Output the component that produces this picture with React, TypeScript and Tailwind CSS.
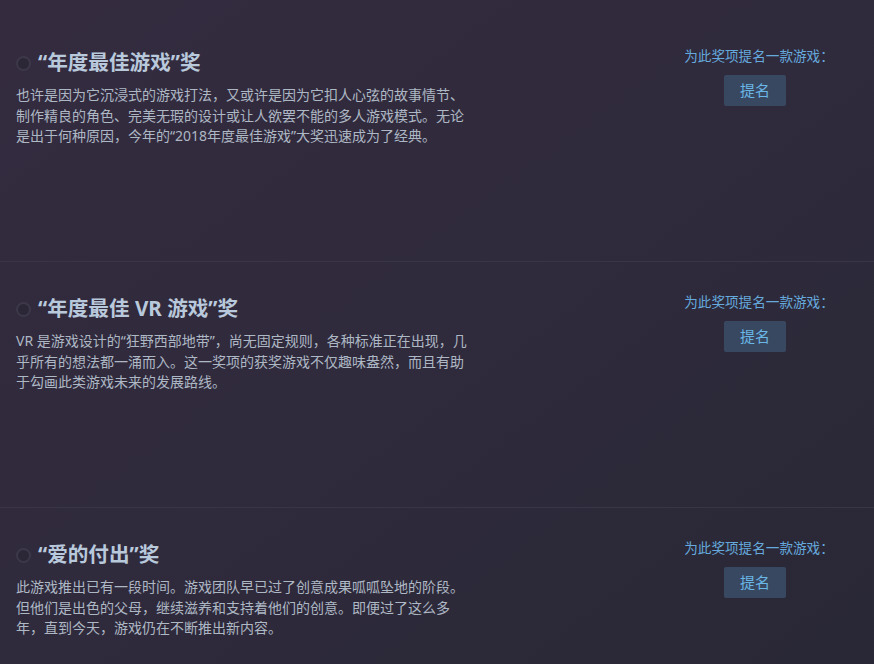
import React from "react";

type Award = { title: string; lines: string[] };

const awards: Award[] = [
  {
    title: "“年度最佳游戏”奖",
    lines: [
      "也许是因为它沉浸式的游戏打法，又或许是因为它扣人心弦的故事情节、",
      "制作精良的角色、完美无瑕的设计或让人欲罢不能的多人游戏模式。无论",
      "是出于何种原因，今年的“2018年度最佳游戏”大奖迅速成为了经典。",
    ],
  },
  {
    title: "“年度最佳 VR 游戏”奖",
    lines: [
      "VR 是游戏设计的“狂野西部地带”，尚无固定规则，各种标准正在出现，几",
      "乎所有的想法都一涌而入。这一奖项的获奖游戏不仅趣味盎然，而且有助",
      "于勾画此类游戏未来的发展路线。",
    ],
  },
  {
    title: "“爱的付出”奖",
    lines: [
      "此游戏推出已有一段时间。游戏团队早已过了创意成果呱呱坠地的阶段。",
      "但他们是出色的父母，继续滋养和支持着他们的创意。即便过了这么多",
      "年，直到今天，游戏仍在不断推出新内容。",
    ],
  },
];

function AwardRow({ award }: { award: Award }) {
  return (
    <section className="flex h-[246px] border-b border-[#3a3447] pt-[31px]">
      <div className="flex-1 pl-4">
        <div className="flex h-[30px] items-center gap-[7px]">
          <span className="mt-[2px] block h-[15px] w-[15px] rounded-full border-2 border-[#3d3849] bg-[#2c2737]" />
          <h2 className="text-[20.6px] font-bold leading-[30px] text-[#b9c9dc]">
            {award.title}
          </h2>
        </div>
        <div className="mt-[8px] text-[14px] leading-[20.5px] text-[#aeb8c4]">
          {award.lines.map((line) => (
            <p key={line} className="whitespace-nowrap">
              {line}
            </p>
          ))}
        </div>
      </div>
      <div className="mr-[19px] flex w-[200px] flex-col items-center">
        <div className="pl-[8px] text-[13.6px] leading-[18px] text-[#66a9dd]">
          为此奖项提名一款游戏：
        </div>
        <button className="mt-[10px] h-[31px] w-[62px] rounded-[2px] bg-[#384860] text-[15px] text-[#6ab6e6]">
          提名
        </button>
      </div>
    </section>
  );
}

export default function App() {
  return (
    <div
      className="h-[664px] w-full overflow-hidden bg-linear-to-br from-[#342b3f] via-[#2f2a3c] to-[#292836] pt-4"
      style={{ fontFamily: '"Noto Sans", "Noto Sans CJK SC", sans-serif' }}
    >
      {awards.map((a) => (
        <AwardRow key={a.title} award={a} />
      ))}
    </div>
  );
}
